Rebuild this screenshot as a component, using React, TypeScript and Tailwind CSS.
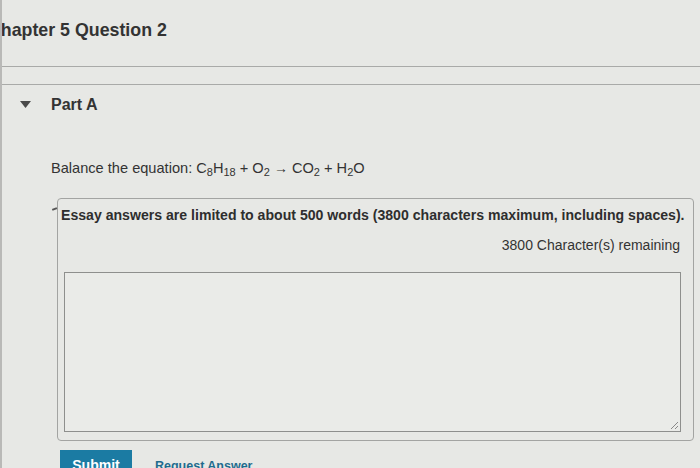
import React from "react";

export default function App() {
  return (
    <div className="relative w-[700px] h-[468px] overflow-hidden bg-[#e7e8e5] text-[#2e2e2e]" style={{ fontFamily: '"Liberation Sans", Arial, sans-serif' }}>
      <div className="absolute left-0 top-0 h-full w-[2px] bg-[#b9b9b7]" />
      <div className="pt-[20px] pl-0">
        <h1 className="ml-[-12px] text-[17.8px] leading-[20px] font-bold text-[#333]">Chapter 5 Question 2</h1>
      </div>
      <div className="mt-[26px] border-t border-[#a9aaa8]" />
      <div className="mt-[17px] border-t border-[#a9aaa8]" />
      <div className="mt-[10px] flex items-center">
        <svg className="ml-[20px] w-[11px] h-[8px]" viewBox="0 0 11 8">
          <polygon points="0,0 11,0 5.5,7" fill="#4a4a4a" />
        </svg>
        <span className="ml-[20px] text-[16px] leading-[20px] font-semibold text-[#333]">Part A</span>
      </div>
      <div className="mt-[43px] ml-[51px] text-[14.6px] leading-[20px] text-[#333]">
        Balance the equation: C<sub className="text-[11px]">8</sub>H<sub className="text-[11px]">18</sub> + O<sub className="text-[11px]">2</sub> <span className="text-[14px]">→</span> CO<sub className="text-[11px]">2</sub> + H<sub className="text-[11px]">2</sub>O
      </div>
      <div className="relative mt-[20px] ml-[57px] w-[637px] h-[243px] rounded-[4px] border border-[#a3a4a2] flex flex-col">
        <span className="absolute left-[-6px] top-[9px] w-[5px] h-[1.5px] bg-[#555] rotate-[-20deg]" />
        <div className="pt-[6px] pl-[3px] text-[14.1px] leading-[20px] font-bold text-[#2e2e2e] whitespace-nowrap">
          Essay answers are limited to about 500 words (3800 characters maximum, including spaces).
        </div>
        <div className="mt-[10px] pr-[13px] text-right text-[14px] leading-[20px] text-[#333]">3800 Character(s) remaining</div>
        <div className="relative mt-[17px] ml-[6px] w-[617px] h-[160px] border border-[#8e8f8d] bg-[#eaebe8]">
          <svg className="absolute right-[1px] bottom-[1px] w-[9px] h-[9px]" viewBox="0 0 9 9">
            <line x1="8" y1="1" x2="1" y2="8" stroke="#888" strokeWidth="1" />
            <line x1="8" y1="5" x2="5" y2="8" stroke="#888" strokeWidth="1" />
          </svg>
        </div>
      </div>
      <div className="mt-[9px] ml-[60px] flex items-start">
        <button className="w-[72px] h-[30px] bg-[#1b7ba3] text-white text-[14px] font-bold leading-[28px]">Submit</button>
        <span className="ml-[23px] mt-[6px] text-[12.5px] font-bold text-[#1f6c8e] leading-[20px]">Request Answer</span>
      </div>
    </div>
  );
}
